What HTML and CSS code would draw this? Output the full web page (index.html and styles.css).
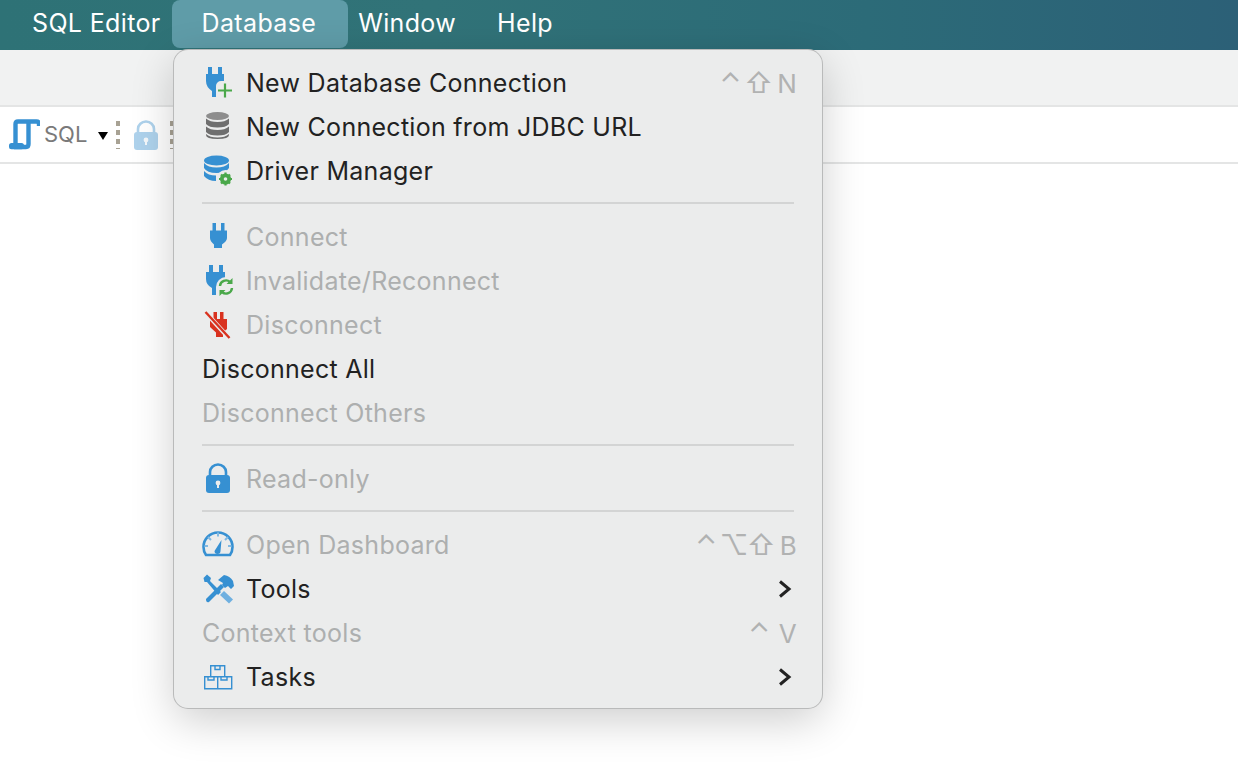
FILE: index.html
```html
<!DOCTYPE html>
<html lang="en">
<head>
    <meta charset="UTF-8">
    <meta name="viewport" content="width=device-width, initial-scale=1.0">
    <title>Database menu</title>
    <link rel="stylesheet" href="styles.css">
</head>
<body>
    <!-- Top menu bar -->
    <nav class="menubar">
        <span class="menu-title">SQL Editor</span>
        <span class="menu-title active">Database</span>
        <span class="menu-title window">Window</span>
        <span class="menu-title help">Help</span>
    </nav>

    <div class="toolbar"></div>

    <div class="sql-bar">
        <svg class="script-icon" width="32" height="32" viewBox="0 0 32 32">
            <path d="M7.500 25V5Q7.500 2.500 10 2.500H28.500Q31 2.500 31 5V7" fill="none" stroke="#3690d2" stroke-width="4.400"/>
            <path d="M20.500 3V25Q20.500 28 18 28H6" fill="none" stroke="#3690d2" stroke-width="4.400"/>
            <rect x="1" y="24" width="15" height="6.200" rx="2.500" fill="#3690d2"/>
        </svg>
        <span class="sql-label">SQL</span>
        <span class="caret"></span>
        <span class="grip"></span>
        <svg class="lock-icon" width="24" height="30" viewBox="0 0 24 30">
            <path d="M4 13V9A8 7.500 0 0 1 20 9V13" fill="none" stroke="#aed2ec" stroke-width="2.600"/>
            <rect x="0" y="12" width="24" height="18" rx="3" fill="#aed2ec"/>
            <circle cx="12" cy="20" r="2.400" fill="#f4f8fb"/>
            <rect x="11" y="20" width="2" height="5" fill="#f4f8fb"/>
        </svg>
        <span class="grip second"></span>
    </div>

    <!-- Database dropdown -->
    <div class="dropdown">
        <div class="item">
            <svg class="icon" width="32" height="32" viewBox="0 0 32 32">
                <path d="M6 0h4v7h6V0h4v7h2v7h-3a5 5 0 0 0-5 5v11h-4v-6Q4 20 4 14V7h2z" fill="#3690d2"/>
                <path d="M23 16.500v14M16 23.500h14" stroke="#4aa84a" stroke-width="2.200"/>
            </svg>
            <span class="label">New Database Connection</span>
            <span class="shortcut"><i>⌃</i><i>⇧</i><b>N</b></span>
        </div>
        <div class="item">
            <svg class="icon" width="32" height="32" viewBox="0 0 32 32">
                <ellipse cx="15.500" cy="5" rx="11.500" ry="4" fill="#8d8d8d"/>
                <path d="M4 7.500Q8 11 15.500 11T27 7.500V13Q24 16.500 15.500 16.500T4 13Z" fill="#6f6f6f"/>
                <path d="M4 15.500Q8 19 15.500 19T27 15.500V21Q24 24.500 15.500 24.500T4 21Z" fill="#6f6f6f"/>
                <path d="M4 23Q8 26.500 15.500 26.500T27 23V24Q27 28 15.500 28T4 24Z" fill="#6f6f6f"/>
            </svg>
            <span class="label">New Connection from JDBC URL</span>
        </div>
        <div class="item">
            <svg class="icon" width="32" height="32" viewBox="0 0 32 32">
                <ellipse cx="14.500" cy="5.500" rx="12.500" ry="5" fill="#3690d2"/>
                <path d="M2 8Q6 12.500 14.500 12.500T27 8V13Q24 18 14.500 18T2 13Z" fill="#3690d2"/>
                <path d="M2 16Q6 20.500 14 20.500V26Q6 26 2 21Z" fill="#3690d2"/>
                <circle cx="23.500" cy="24" r="9" fill="#ebecec"/>
                <circle cx="23.500" cy="24" r="4" fill="none" stroke="#4aa84a" stroke-width="3.200"/>
                <path d="M23.500 17.500v13M17 24h13M19 19.500l9 9M28 19.500l-9 9" stroke="#4aa84a" stroke-width="2.200"/>
                <circle cx="23.500" cy="24" r="1.800" fill="#ebecec"/>
            </svg>
            <span class="label">Driver Manager</span>
        </div>

        <div class="separator"></div>

        <div class="item disabled">
            <svg class="icon" width="32" height="32" viewBox="0 0 32 32">
                <path d="M10.500 2H14v7.500h5V2h3.500v7.500H25V17q0 3-5 6.500V27h-8v-3.500Q8 20 8 17V9.500h2.500z" fill="#3690d2"/>
            </svg>
            <span class="label">Connect</span>
        </div>
        <div class="item disabled">
            <svg class="icon" width="32" height="32" viewBox="0 0 32 32">
                <path d="M7 0h4v7h6V0h4v7h2v8q-2 4-9 7v8h-4v-7Q4 20 4 14V7h3z" fill="#3690d2"/>
                <circle cx="24" cy="22" r="10" fill="#ebecec"/>
                <path d="M18 21a6 6 0 0 1 10-4M30 23a6 6 0 0 1-10 4" fill="none" stroke="#4aa84a" stroke-width="2.400"/>
                <path d="M30.500 13v6h-6zM17.500 31v-6h6z" fill="#4aa84a"/>
            </svg>
            <span class="label">Invalidate/Reconnect</span>
        </div>
        <div class="item disabled">
            <svg class="icon" width="32" height="32" viewBox="0 0 32 32">
                <path d="M11.500 3H15v7h3V3h3.500v7H25v10l-4 3.500V28h-7v-4.500L8 18v-8h3.500z" fill="#d9321f"/>
                <path d="M5 5l21 23" stroke="#ebecec" stroke-width="4.500"/>
                <path d="M3.500 3l24 26" stroke="#d9321f" stroke-width="2.400"/>
            </svg>
            <span class="label">Disconnect</span>
        </div>
        <div class="item">
            <span class="label">Disconnect All</span>
        </div>
        <div class="item disabled">
            <span class="label">Disconnect Others</span>
        </div>

        <div class="separator"></div>

        <div class="item disabled">
            <svg class="icon" width="32" height="32" viewBox="0 0 32 32">
                <path d="M8 14V9A8 7.500 0 0 1 24 9V13" fill="none" stroke="#3690d2" stroke-width="2.600"/>
                <rect x="4" y="12" width="24" height="18" rx="3" fill="#3690d2"/>
                <circle cx="16" cy="20" r="2.400" fill="#ebecec"/>
                <rect x="15" y="20" width="2" height="5" fill="#ebecec"/>
            </svg>
            <span class="label">Read-only</span>
        </div>

        <div class="separator"></div>

        <div class="item disabled">
            <svg class="icon" width="32" height="32" viewBox="0 0 32 32">
                <path d="M4 26Q1.500 22.500 1.500 18A14.500 14.500 0 0 1 30.500 18Q30.500 22.500 28 26Z" fill="none" stroke="#3690d2" stroke-width="2.600"/>
                <path d="M16 3.500v4M6 8l3 3M26 8l-3 3M2.500 17h3.500M26 17h3.500" stroke="#82b9e2" stroke-width="2"/>
                <path d="M19.500 11l-1 11a3 3 0 0 1-6 0z" fill="#3690d2"/>
            </svg>
            <span class="label">Open Dashboard</span>
            <span class="shortcut"><i>⌃</i><i>⌥</i><i>⇧</i><b>B</b></span>
        </div>
        <div class="item">
            <svg class="icon" width="32" height="32" viewBox="0 0 32 32">
                <path d="M1.500 5L5 1.500 9 5l-1 3 11 11-3 3L5 9 2.500 9z" fill="#3690d2"/>
                <path d="M18 22l4-4 9 8.500-4 4z" fill="#6fb0e0"/>
                <path d="M4 26L19 11l3 3L7 29q-3 1-3-3z" fill="#3690d2"/>
                <path d="M16 7l6-5q6 1 9 6l1 5-3 3-3-3-3 2-3-3 1-2z" fill="#3690d2"/>
            </svg>
            <span class="label">Tools</span>
            <svg class="chevron" width="14" height="20" viewBox="0 0 14 20">
                <path d="M2 2.500l9 7.500-9 7.500" fill="none" stroke="#222" stroke-width="3"/>
            </svg>
        </div>
        <div class="item disabled">
            <span class="label">Context tools</span>
            <span class="shortcut"><i>⌃</i><b>V</b></span>
        </div>
        <div class="item">
            <svg class="icon" width="32" height="32" viewBox="0 0 32 32" fill="none" stroke="#3690d2" stroke-width="1.400">
                <path d="M8.700 15.700V4.700H22.700V15.700M13 4.700v3.800h5V4.700"/>
                <path d="M2.700 15.700H29.700V27.700H2.700ZM15.700 15.700V27.700M6 15.700v3.300h6v-3.300M19 15.700v3.300h6v-3.300"/>
            </svg>
            <span class="label">Tasks</span>
            <svg class="chevron" width="14" height="20" viewBox="0 0 14 20">
                <path d="M2 2.500l9 7.500-9 7.500" fill="none" stroke="#222" stroke-width="3"/>
            </svg>
        </div>
    </div>
</body>
</html>
```

FILE: styles.css
```css
body {
    font-family: Inter, "Liberation Sans", sans-serif;
    background: #fff;
    margin: 0;
    height: 778px;
    overflow: hidden;
    position: relative;
    color: #222;
}

.menubar {
    height: 50px;
    box-sizing: border-box;
    padding: 0 0 2px 32px;
    display: flex;
    align-items: stretch;
    background: linear-gradient(90deg, #2e7276 0%, #317378 35%, #2c6b78 70%, #2c6077 100%);
    color: #fff;
    font-size: 25px;
    letter-spacing: 0.35px;
}

.menu-title {
    display: flex;
    align-items: center;
    white-space: nowrap;
    padding-bottom: 2px;
}

.menu-title.active {
    margin-left: 11px;
    padding: 0 32px 2px 30px;
    background: #5f9ca8;
    border-radius: 8px;
}

.menu-title.window {
    margin-left: 10px;
}

.menu-title.help {
    margin-left: 41px;
}

.toolbar {
    height: 55px;
    background: #f1f2f2;
    border-bottom: 2px solid #e4e5e5;
}

.sql-bar {
    height: 55px;
    border-bottom: 2px solid #e4e5e5;
    display: flex;
    align-items: center;
    padding-left: 8px;
}

.script-icon {
    margin-right: 4px;
}

.sql-label {
    font-size: 22px;
    color: #7a7a7a;
    width: 54px;
    padding-bottom: 1px;
}

.caret {
    width: 0;
    height: 0;
    border-left: 5px solid transparent;
    border-right: 5px solid transparent;
    border-top: 8px solid #000;
    margin-top: 2px;
}

.grip {
    width: 4px;
    height: 28px;
    margin-left: 8px;
    background: repeating-linear-gradient(180deg, #a8a294 0, #a8a294 5px, transparent 5px, transparent 9px);
}

.lock-icon {
    margin-left: 14px;
}

.grip.second {
    margin-left: 12px;
}

.dropdown {
    position: absolute;
    left: 174px;
    top: 50px;
    width: 648px;
    height: 658px;
    box-sizing: border-box;
    padding: 11px 28px 9px;
    background: #ebecec;
    border-radius: 14px;
    box-shadow: 0 0 0 1px #b9baba, 0 12px 44px rgba(0, 0, 0, 0.2);
    font-size: 25px;
    letter-spacing: 0.28px;
}

.item {
    height: 44px;
    display: flex;
    align-items: center;
    white-space: nowrap;
}

.item.disabled {
    color: #adafaf;
}

.icon {
    flex: none;
    margin-right: 12px;
}

.label {
    flex-grow: 1;
}

.shortcut {
    display: flex;
    align-items: center;
    color: #b1b2b2;
    font-size: 26px;
    margin-right: -3px;
}

.shortcut i {
    width: 27px;
    text-align: center;
    font-style: normal;
    font-size: 28px;
    line-height: 1;
}

.shortcut b {
    font-weight: 400;
    margin-left: 6px;
}

.chevron {
    margin-right: 2px;
}

.separator {
    height: 2px;
    background: #d3d4d4;
    margin: 9px 0 11px;
}
```
